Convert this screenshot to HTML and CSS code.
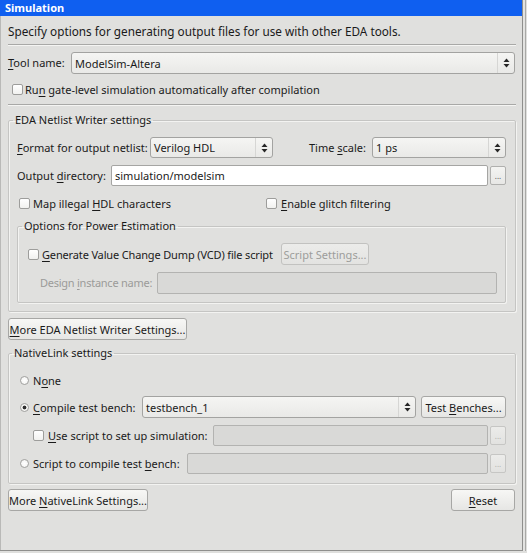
FILE: index.html
```html
<!DOCTYPE html>
<html>
<head>
<meta charset="utf-8">
<title>Simulation</title>
<link rel="stylesheet" href="styles.css">
</head>
<body>
<div class="window">
  <div class="titlebar">Simulation</div>
  <div class="content">
    <div class="desc">Specify options for generating output files for use with other EDA tools.</div>
    <div class="sep"></div>
    <div class="tool-row">
      <span class="lbl"><u>T</u>ool name:</span>
      <div class="select tool-select"><span class="val">ModelSim-Altera</span><span class="arrow"><svg width="7" height="10" viewBox="0 0 7 10"><polygon points="0.5,4 3.5,0.5 6.5,4"/><polygon points="0.5,6 3.5,9.5 6.5,6"/></svg></span></div>
    </div>
    <div class="check gate"><span class="cb"></span><span>Ru<u>n</u> gate-level simulation automatically after compilation</span></div>
    <div class="sep sep2"></div>

    <fieldset class="group eda">
      <legend>EDA Netlist Writer settings</legend>
      <div class="fmt-row">
        <span class="lbl"><u>F</u>ormat for output netlist:</span>
        <div class="select"><span class="val">Verilog HDL</span><span class="arrow"><svg width="7" height="10" viewBox="0 0 7 10"><polygon points="0.5,4 3.5,0.5 6.5,4"/><polygon points="0.5,6 3.5,9.5 6.5,6"/></svg></span></div>
        <span class="lbl time-lbl">Time <u>s</u>cale:</span>
        <div class="select"><span class="val">1 ps</span><span class="arrow"><svg width="7" height="10" viewBox="0 0 7 10"><polygon points="0.5,4 3.5,0.5 6.5,4"/><polygon points="0.5,6 3.5,9.5 6.5,6"/></svg></span></div>
      </div>
      <div class="dir-row">
        <span class="lbl">Output <u>d</u>irectory:</span>
        <div class="input">simulation/modelsim</div>
        <div class="dots">...</div>
      </div>
      <div class="checks-row">
        <div class="check map"><span class="cb"></span><span>Map illegal <u>H</u>DL characters</span></div>
        <div class="check glitch"><span class="cb"></span><span><u>E</u>nable glitch filtering</span></div>
      </div>

      <fieldset class="group power">
        <legend>Options for Power Estimation</legend>
        <div class="vcd-row">
          <div class="check vcd"><span class="cb"></span><span class="vcd-text"><u>G</u>enerate Value Change Dump (VCD) file script</span></div>
          <div class="btn disabled">Script Settings...</div>
        </div>
        <div class="design-row">
          <span class="lbl disabled-lbl">Design <u>i</u>nstance name:</span>
          <div class="input disabled"></div>
        </div>
      </fieldset>
    </fieldset>

    <div class="btn more-eda"><span><u>M</u>ore EDA Netlist Writer Settings...</span></div>

    <fieldset class="group native">
      <legend>NativeLink settings</legend>
      <div class="radio-row none-row"><span class="radio"></span><span>N<u>o</u>ne</span></div>
      <div class="compile-row">
        <div class="radio-row"><span class="radio checked"></span><span><u>C</u>ompile test bench:</span></div>
        <div class="select"><span class="val">testbench_1</span><span class="arrow"><svg width="7" height="10" viewBox="0 0 7 10"><polygon points="0.5,4 3.5,0.5 6.5,4"/><polygon points="0.5,6 3.5,9.5 6.5,6"/></svg></span></div>
        <div class="btn test-btn"><span>Test <u>B</u>enches...</span></div>
      </div>
      <div class="use-row">
        <div class="check use"><span class="cb"></span><span><u>U</u>se script to set up simulation:</span></div>
        <div class="input disabled"></div>
        <div class="dots disabled">...</div>
      </div>
      <div class="script-row">
        <div class="radio-row"><span class="radio"></span><span>Script to compile test <u>b</u>ench:</span></div>
        <div class="input disabled"></div>
        <div class="dots disabled">...</div>
      </div>
    </fieldset>

    <div class="bottom-row">
      <div class="btn more-native"><span>More <u>N</u>ativeLink Settings...</span></div>
      <div class="btn reset"><span><u>R</u>eset</span></div>
    </div>
  </div>
</div>
</body>
</html>
```

FILE: styles.css
```css
* { box-sizing: border-box; }
html, body { margin: 0; padding: 0; }
body {
  width: 527px;
  height: 553px;
  overflow: hidden;
  background: #dfdfdd;
  font-family: "Noto Sans", "Open Sans", sans-serif;
  font-size: 11px;
  color: #1a1a1a;
}
u { text-underline-offset: 2px; text-decoration-thickness: 1px; }

.window {
  width: 523px;
  height: 551px;
  background: #e0e0de;
  border-right: 1px solid #8f8f8d;
  border-bottom: 1px solid #8f8f8d;
  box-shadow: 2px 0 0 #e3e3e1, 3px 0 0 #a9a9a7;
  display: flex;
  flex-direction: column;
}
.titlebar {
  height: 16px;
  background: #0f5ff0;
  color: #fff;
  font-weight: bold;
  font-size: 11px;
  line-height: 16px;
  padding-left: 5px;
}
.content {
  flex: 1;
  border-left: 1px solid #b9b9b7;
  padding: 0 6px 0 7px;
}
.desc { margin-top: 7px; height: 16px; line-height: 16px; font-size: 11.75px; white-space: nowrap; }
.sep {
  margin-top: 5px;
  height: 2px;
  border-top: 1px solid #a9a9a7;
  border-bottom: 1px solid #f5f5f3;
}
.sep2 { margin-top: 7px; }

.lbl { white-space: nowrap; line-height: 16px; }

.tool-row {
  margin-top: 6px;
  height: 22px;
  display: grid;
  grid-template-columns: 63px 1fr;
  align-items: center;
  padding-right: 1px;
}

.select {
  display: flex;
  align-items: center;
  height: 100%;
  border: 1px solid #a3a3a1;
  border-radius: 3px;
  background: linear-gradient(#f5f5f3, #e9e9e7);
  padding-left: 3px;
  white-space: nowrap;
}
.select .val { flex: 1; }
.arrow {
  width: 17px;
  height: 100%;
  border-left: 1px solid #d6d6d4;
  display: flex;
  align-items: center;
  justify-content: center;
}
.arrow svg { fill: #262626; }

.check { display: flex; align-items: center; height: 16px; white-space: nowrap; }
.cb {
  flex: none;
  width: 11px;
  height: 11px;
  border: 1px solid #9d9d9b;
  border-radius: 2px;
  background: linear-gradient(#ffffff, #f1f1ef);
  margin-right: 3px;
}
.gate { margin-top: 7px; }
.gate .cb { margin-left: 4px; margin-right: 2px; }

.group {
  margin: 6px 0 0;
  min-width: 0;
  border: 1px solid #c5c5c3;
  border-radius: 2px;
  box-shadow: inset 1px 1px 0 #f3f3f1, 1px 1px 0 #f3f3f1;
}
.group legend {
  padding: 0 2px;
  line-height: 16px;
  height: 16px;
  white-space: nowrap;
}
.eda { padding: 9px 9px 8px 8px; }
.eda > legend { margin-left: -4px; }

.fmt-row {
  display: grid;
  grid-template-columns: 133px 123px 1fr 134px;
  height: 21px;
  align-items: center;
}
.time-lbl { text-align: right; padding-right: 6px; }
.dir-row {
  margin-top: 7px;
  height: 21px;
  display: grid;
  grid-template-columns: 92px 1fr 16px;
  column-gap: 2px;
  align-items: center;
}
.input {
  height: 100%;
  background: #fff;
  border: 1px solid #a5a5a3;
  border-radius: 2px;
  padding-left: 3px;
  display: flex;
  align-items: center;
  white-space: nowrap;
}
.input.disabled { background: #d9d9d7; border-color: #b3b3b1; }
.dots {
  height: 19px;
  align-self: center;
  border: 1px solid #b0b0ae;
  border-radius: 2px;
  background: linear-gradient(#f4f4f2, #e7e7e5);
  font-size: 8px;
  line-height: 8px;
  color: #555;
  display: flex;
  align-items: flex-end;
  justify-content: center;
  padding-bottom: 4px;
}
.dots.disabled { color: #b0b0ae; border-color: #c6c6c4; background: linear-gradient(#ececea, #e2e2e0); }

.checks-row {
  margin-top: 9px;
  height: 16px;
  display: grid;
  grid-template-columns: 247px 1fr;
}
.checks-row .cb { margin-left: 2px; }
.glitch .cb { margin-right: 4px; }

.power { margin-top: 7px; padding: 9px 8px 8px 10px; }
.power > legend { margin-left: -6px; }
.vcd-row {
  height: 22px;
  display: grid;
  grid-template-columns: 253px 88px;
  align-items: center;
}
.vcd-text { letter-spacing: -0.15px; }
.design-row {
  margin-top: 7px;
  height: 22px;
  display: grid;
  grid-template-columns: 129px 1fr;
  align-items: center;
}
.disabled-lbl { color: #9b9b99; padding-left: 12px; letter-spacing: -0.25px; }

.btn {
  height: 22px;
  border: 1px solid #a7a7a5;
  border-radius: 3px;
  background: linear-gradient(#f7f7f5, #e6e6e4);
  display: flex;
  align-items: center;
  justify-content: center;
  white-space: nowrap;
}
.btn.disabled { color: #9d9d9b; border-color: #c2c2c0; background: linear-gradient(#ececea, #e3e3e1); }
.more-eda { margin-top: 6px; width: 179px; }

.native { margin-top: 5px; padding: 11px 9px 9px 11px; }
.native > legend { margin-left: -8px; }
.radio-row { display: flex; align-items: center; height: 16px; white-space: nowrap; }
.radio {
  flex: none;
  width: 9px;
  height: 9px;
  border-radius: 50%;
  border: 1px solid #a1a19f;
  background: radial-gradient(circle, #ffffff 0, #f1f1ef 100%);
  margin-right: 4px;
}
.radio.checked { background: radial-gradient(circle, #2e2e2e 0, #2e2e2e 1.5px, #fafaf8 2.3px, #f1f1ef 100%); }
.compile-row {
  margin-top: 8px;
  height: 22px;
  display: grid;
  grid-template-columns: 122px 274px 90px;
  align-items: center;
}
.compile-row .select { height: 22px; }
.test-btn { margin-left: 5px; }
.use-row {
  margin-top: 7px;
  height: 21px;
  display: grid;
  grid-template-columns: 191px 1fr 16px;
  column-gap: 2px;
  align-items: center;
}
.use .cb { margin-left: 13px; margin-right: 4px; }
.script-row {
  margin-top: 7px;
  height: 21px;
  display: grid;
  grid-template-columns: 165px 1fr 16px;
  column-gap: 2px;
  align-items: center;
}
.bottom-row {
  margin-top: 5px;
  display: flex;
  justify-content: space-between;
  padding-right: 1px;
}
.more-native { width: 140px; }
.reset { width: 64px; }
```
